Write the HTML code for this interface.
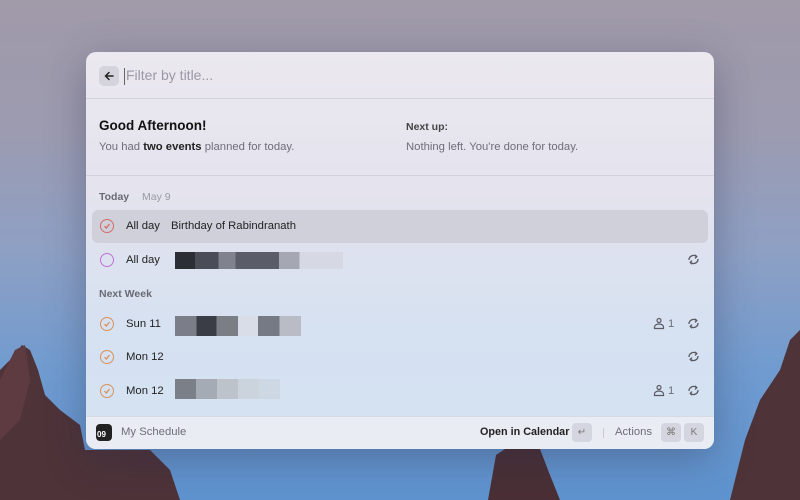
<!DOCTYPE html>
<html><head><style>
*{margin:0;padding:0;box-sizing:border-box}
body{width:800px;height:500px;overflow:hidden;font-family:"Liberation Sans",sans-serif;background:linear-gradient(180deg,#a09aa9 0%,#9d9bb0 25%,#8ea0c4 50%,#6f9bd0 75%,#5e93cf 100%);position:relative}
.win{position:absolute;left:86px;top:52px;width:628px;height:397px;border-radius:10px;overflow:hidden;background:linear-gradient(180deg,#ebe8ef 0%,#e4e3ee 35%,#d6e1f1 70%,#d3e2f3 100%);box-shadow:0 10px 40px rgba(40,40,70,.35)}
.abs{position:absolute}
.t{position:absolute;font-size:11.3px;color:#222;white-space:nowrap}
.g{color:#6e6e78}
.circ{position:absolute;width:14px;height:14px;border-radius:50%;border:1.5px solid #d9915a}
.circ svg{position:absolute;left:2px;top:2px}
.px{position:absolute;height:20px}
</style></head><body>
<svg class="abs" style="left:0;top:0" width="800" height="500">
<polygon points="0,500 0,370 10,360 22,345 30,350 38,370 45,395 60,410 80,425 85,450 150,450 170,470 180,500" fill="#4e3339"/>
<polygon points="0,380 15,350 25,345 30,380 20,420 0,440" fill="#5e3b40"/>
<polygon points="488,500 496,455 505,449 540,449 548,470 560,500" fill="#4a3036"/>
<polygon points="730,500 745,440 760,400 780,370 790,340 800,330 800,500" fill="#4e3339"/>
</svg>
<div class="win">
 <div class="abs" style="left:13px;top:14px;width:20px;height:20px;border-radius:5px;background:#d5d3dc"></div>
 <svg class="abs" style="left:17px;top:18px" width="12" height="12" viewBox="0 0 12 12"><path d="M10 6H2.5M6 2.5L2.5 6 6 9.5" stroke="#222" stroke-width="1.5" fill="none" stroke-linecap="round"/></svg>
 <div class="abs" style="left:38px;top:16px;width:1px;height:17px;background:#666"></div>
 <div class="t" style="left:40px;top:15px;font-size:14px;color:#9a98a4">Filter by title...</div>
 <div class="abs" style="left:0;top:46px;width:628px;height:1px;background:#d3d1da"></div>
 <div class="t" style="left:13px;top:66px;font-size:13.5px;font-weight:bold;color:#111">Good Afternoon!</div>
 <div class="t g" style="left:13px;top:89px">You had <b style="color:#222">two events</b> planned for today.</div>
 <div class="t" style="left:320px;top:69px;font-weight:bold;color:#444;font-size:10.5px">Next up:</div>
 <div class="t g" style="left:320px;top:89px">Nothing left. You're done for today.</div>
 <div class="abs" style="left:0;top:123px;width:628px;height:1px;background:#d3d1da"></div>
 <div class="t" style="left:13px;top:139px;font-size:10.5px;font-weight:bold;color:#6a6a72">Today</div>
 <div class="t" style="left:56px;top:139px;font-size:10.5px;color:#9a9aa4">May 9</div>
 <div class="abs" style="left:6px;top:158px;width:616px;height:33px;border-radius:6px;background:#cfd0da"></div>
 <div class="circ" style="left:14px;top:167px;border-color:#d56a66"><svg width="8" height="8" viewBox="0 0 8 8"><path d="M1.5 4.2L3.3 6 6.5 2" stroke="#d56a66" stroke-width="1.3" fill="none"/></svg></div>
 <div class="t" style="left:40px;top:168px">All day</div>
 <div class="t" style="left:85px;top:168px">Birthday of Rabindranath</div>
 <div class="circ" style="left:14px;top:201px;border-color:#bf72d6"></div>
 <div class="t" style="left:40px;top:202px">All day</div>
 <div class="px" style="left:89px;top:200px;width:168px;height:17px;background:linear-gradient(90deg,#2c2e36 0 12%,#4a4d58 12% 26%,#80828d 26% 36%,#5a5d68 36% 62%,#a5a8b2 62% 74%,#d6d9e4 74% 100%)"></div>
 <svg class="abs" style="left:601px;top:201px" width="13" height="13" viewBox="0 0 13 13"><path d="M2 7a4.5 4.5 0 0 1 7.5-3.4M11 6a4.5 4.5 0 0 1-7.5 3.4M8 1.8l1.8 1.8L8 5.4M5 11.2L3.2 9.4 5 7.6" stroke="#5a5a64" stroke-width="1.3" fill="none"/></svg>
 <div class="t" style="left:13px;top:236px;font-size:10.5px;font-weight:bold;color:#6a6a72">Next Week</div>
 <div class="circ" style="left:14px;top:265px"><svg width="8" height="8" viewBox="0 0 8 8"><path d="M1.5 4.2L3.3 6 6.5 2" stroke="#d9915a" stroke-width="1.3" fill="none"/></svg></div>
 <div class="t" style="left:40px;top:266px">Sun 11</div>
 <div class="px" style="left:89px;top:264px;width:126px;background:linear-gradient(90deg,#7b7e88 0 17%,#3a3d46 17% 33%,#7c7e86 33% 50%,#d8dde8 50% 66%,#767a84 66% 83%,#b9bcc4 83% 100%)"></div>
 <div class="circ" style="left:14px;top:298px"><svg width="8" height="8" viewBox="0 0 8 8"><path d="M1.5 4.2L3.3 6 6.5 2" stroke="#d9915a" stroke-width="1.3" fill="none"/></svg></div>
 <div class="t" style="left:40px;top:299px">Mon 12</div>
 <div class="circ" style="left:14px;top:332px"><svg width="8" height="8" viewBox="0 0 8 8"><path d="M1.5 4.2L3.3 6 6.5 2" stroke="#d9915a" stroke-width="1.3" fill="none"/></svg></div>
 <div class="t" style="left:40px;top:333px">Mon 12</div>
 <div class="px" style="left:89px;top:327px;width:105px;background:linear-gradient(90deg,#7a7f88 0 20%,#a4abb4 20% 40%,#bcc3cb 40% 60%,#cbd3dc 60% 80%,#cdd8e4 80% 100%)"></div>
 <svg class="abs" style="left:601px;top:265px" width="13" height="13" viewBox="0 0 13 13"><path d="M2 7a4.5 4.5 0 0 1 7.5-3.4M11 6a4.5 4.5 0 0 1-7.5 3.4M8 1.8l1.8 1.8L8 5.4M5 11.2L3.2 9.4 5 7.6" stroke="#5a5a64" stroke-width="1.3" fill="none"/></svg>
 <svg class="abs" style="left:601px;top:298px" width="13" height="13" viewBox="0 0 13 13"><path d="M2 7a4.5 4.5 0 0 1 7.5-3.4M11 6a4.5 4.5 0 0 1-7.5 3.4M8 1.8l1.8 1.8L8 5.4M5 11.2L3.2 9.4 5 7.6" stroke="#5a5a64" stroke-width="1.3" fill="none"/></svg>
 <svg class="abs" style="left:601px;top:332px" width="13" height="13" viewBox="0 0 13 13"><path d="M2 7a4.5 4.5 0 0 1 7.5-3.4M11 6a4.5 4.5 0 0 1-7.5 3.4M8 1.8l1.8 1.8L8 5.4M5 11.2L3.2 9.4 5 7.6" stroke="#5a5a64" stroke-width="1.3" fill="none"/></svg>
 <svg class="abs" style="left:567px;top:265px" width="12" height="13" viewBox="0 0 12 13"><circle cx="6" cy="3.5" r="2" stroke="#5a5a64" stroke-width="1.2" fill="none"/><path d="M1.5 11.5V10a4.5 3 0 0 1 9 0v1.5z" stroke="#5a5a64" stroke-width="1.2" fill="none"/></svg>
 <div class="t g" style="left:582px;top:266px">1</div>
 <svg class="abs" style="left:567px;top:332px" width="12" height="13" viewBox="0 0 12 13"><circle cx="6" cy="3.5" r="2" stroke="#5a5a64" stroke-width="1.2" fill="none"/><path d="M1.5 11.5V10a4.5 3 0 0 1 9 0v1.5z" stroke="#5a5a64" stroke-width="1.2" fill="none"/></svg>
 <div class="t g" style="left:582px;top:333px">1</div>
 <div class="abs" style="left:0;top:364px;width:628px;height:33px;background:#e9ecf3;border-top:1px solid #d6dae4"></div>
 <div class="abs" style="left:10px;top:372px;width:16px;height:17px;border-radius:4px;background:#222"></div>
 <div class="t" style="left:11px;top:378px;font-size:8px;font-weight:bold;color:#fff">09</div>
 <div class="t g" style="left:35px;top:374px">My Schedule</div>
 <div class="t" style="left:394px;top:374px;font-weight:bold;font-size:10.8px">Open in Calendar</div>
 <div class="abs" style="left:486px;top:371px;width:20px;height:19px;border-radius:4px;background:#d3d6de;color:#777;font-size:10px;text-align:center;line-height:19px">↵</div>
 <div class="abs" style="left:517px;top:376px;width:1px;height:10px;background:#ccc"></div>
 <div class="t g" style="left:529px;top:374px">Actions</div>
 <div class="abs" style="left:575px;top:371px;width:20px;height:19px;border-radius:4px;background:#d3d6de;color:#777;font-size:10px;text-align:center;line-height:19px">⌘</div>
 <div class="abs" style="left:598px;top:371px;width:20px;height:19px;border-radius:4px;background:#d3d6de;color:#777;font-size:10px;text-align:center;line-height:19px">K</div>
</div>
</body></html>
